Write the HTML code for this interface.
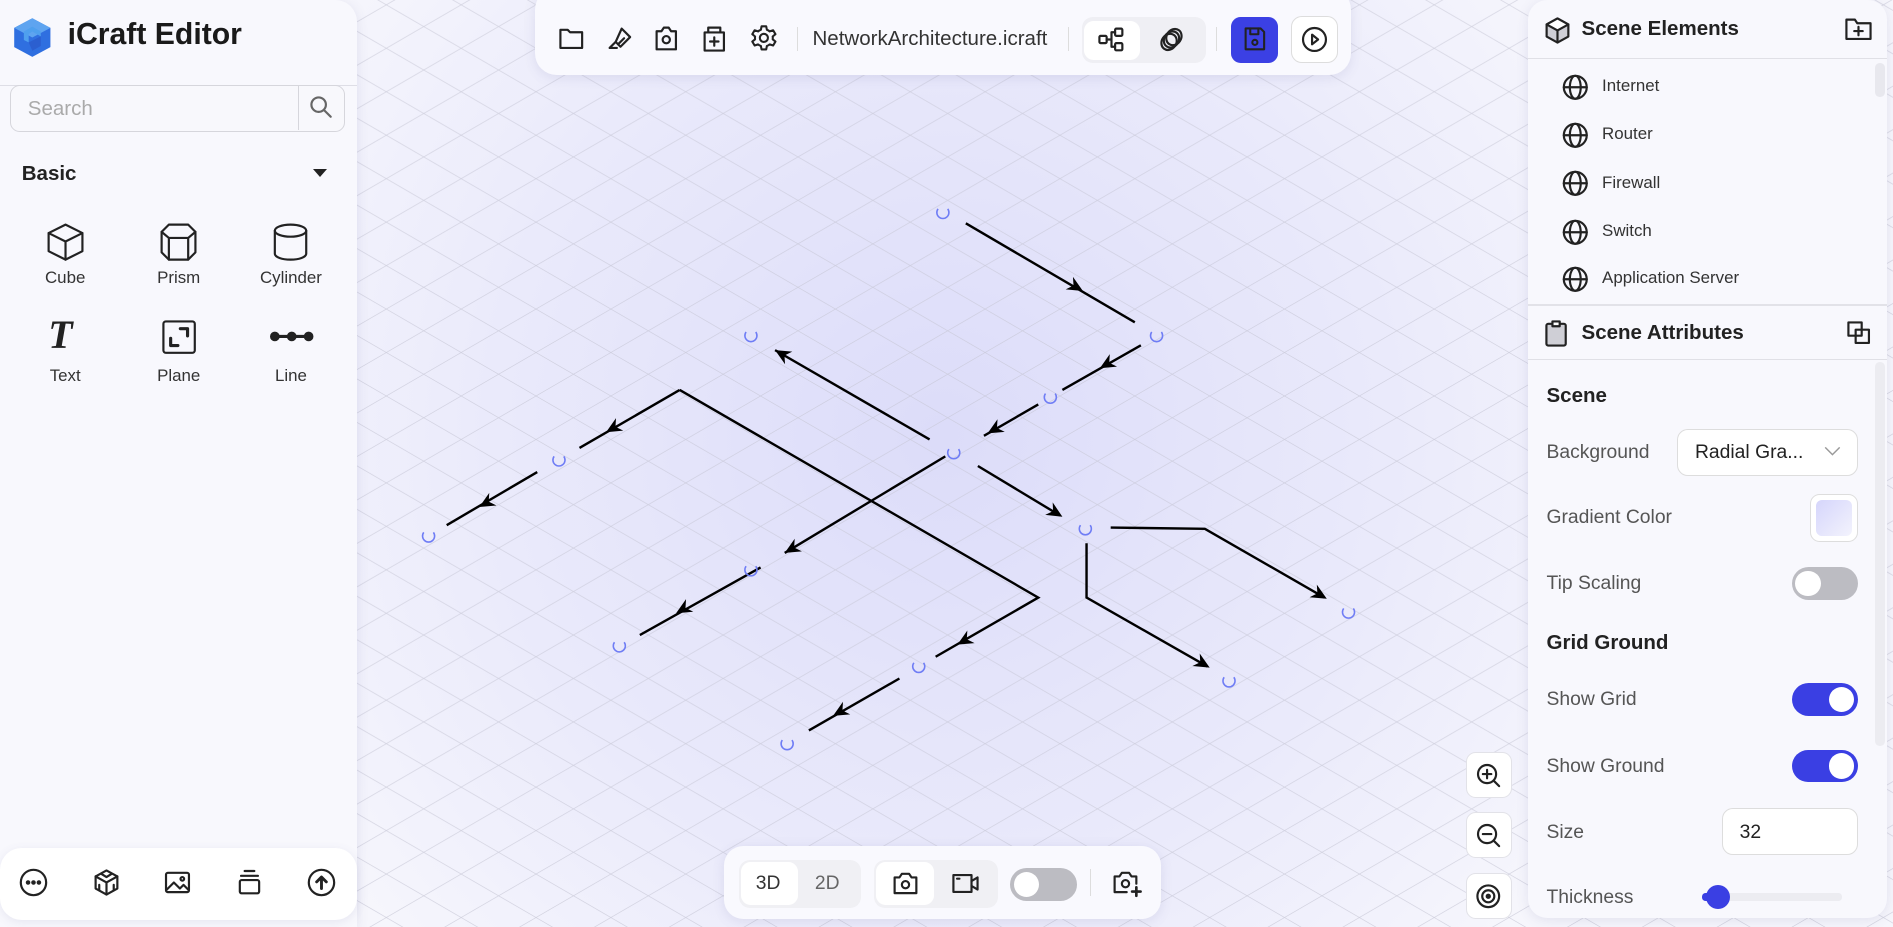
<!DOCTYPE html>
<html><head><meta charset="utf-8">
<style>
*{box-sizing:border-box;margin:0;padding:0}
html,body{width:1893px;height:927px;overflow:hidden;background:#f4f4fb}
#w{zoom:1.20727;width:1568px;height:768px;position:relative;font-family:"Liberation Sans",sans-serif;color:#222;overflow:hidden}
.abs{position:absolute}
.panel{background:#f8f8fd;box-shadow:0 2px 10px rgba(80,80,140,.12)}
svg.i{fill:none;stroke:#222;stroke-width:1.8;stroke-linecap:round;stroke-linejoin:round}
.lbl{font-size:14px;color:#333;text-align:center;width:80px;position:absolute}
.row{position:absolute;left:1281px;font-size:16px;color:#555}
.tg{position:absolute;width:55px;height:27px;border-radius:14px;background:#bcbcc2}
.tg::after{content:"";position:absolute;top:3px;left:3px;width:21px;height:21px;border-radius:50%;background:#fff}
.tg.on{background:#3a3fe3}
.tg.on::after{left:31px}
.el{position:absolute;left:1296px;font-size:14px;color:#333}
</style></head><body><div id="w">

<!-- canvas -->
<svg class="abs" style="left:0;top:0" width="1568" height="768">
<defs>
<radialGradient id="bg" cx="780" cy="360" r="620" gradientUnits="userSpaceOnUse">
<stop offset="0" stop-color="#dcdcf9"/><stop offset="0.6" stop-color="#eaeafb"/><stop offset="1" stop-color="#f6f6fc"/></radialGradient>
<pattern id="grid" width="62" height="36" patternUnits="userSpaceOnUse" x="10" y="4">
<path d="M0 0L62 36M62 0L0 36" stroke="#c6c6d4" stroke-width="0.5" stroke-opacity="0.8" fill="none"/></pattern>
<path id="ah" d="M0 0L-13 -6L-9 0L-13 6Z" fill="#000"/>
</defs>
<rect width="1568" height="768" fill="url(#bg)"/>
<rect width="1568" height="768" fill="url(#grid)"/>
<g stroke="#000" stroke-width="2" fill="none">
<path d="M800 185L940 267"/>
<path d="M945 286L880 323"/><path d="M860 335L815 361"/>
<path d="M770 364L642 290"/>
<path d="M810 386L878 427"/>
<path d="M920 437L998 438L1097 495"/>
<path d="M900 450L900 495L1000 552"/>
<path d="M783 378L650 458"/><path d="M630 470L530 526"/>
<path d="M563 323L860 495L775 544"/><path d="M745 562L670 605"/>
<path d="M563 323L480 371"/><path d="M445 391L370 435"/>
</g>
<g>
<use href="#ah" transform="translate(897,241) rotate(30)"/>
<use href="#ah" transform="translate(911,305) rotate(150)"/>
<use href="#ah" transform="translate(818,359) rotate(150)"/>
<use href="#ah" transform="translate(642,290) rotate(210)"/>
<use href="#ah" transform="translate(880,428) rotate(31)"/>
<use href="#ah" transform="translate(1099,496) rotate(30)"/>
<use href="#ah" transform="translate(1002,553) rotate(30)"/>
<use href="#ah" transform="translate(650,458) rotate(150)"/>
<use href="#ah" transform="translate(560,508) rotate(150)"/>
<use href="#ah" transform="translate(793,534) rotate(150)"/>
<use href="#ah" transform="translate(690,593) rotate(150)"/>
<use href="#ah" transform="translate(502,358) rotate(150)"/>
<use href="#ah" transform="translate(397,420) rotate(150)"/>
</g>
<g fill="none" stroke="#6f7df5" stroke-width="1.3">
<path id="nd" d="M-4 -3A5 5 0 1 0 4 -3" transform="translate(781,176)"/>
<use href="#nd" transform="translate(177,102)"/>
<use href="#nd" transform="translate(89,153)"/>
<use href="#nd" transform="translate(-159,102)"/>
<use href="#nd" transform="translate(9,199)"/>
<use href="#nd" transform="translate(-318,205)"/>
<use href="#nd" transform="translate(-426,268)"/>
<use href="#nd" transform="translate(118,262)"/>
<use href="#nd" transform="translate(-159,296)"/>
<use href="#nd" transform="translate(-268,359)"/>
<use href="#nd" transform="translate(-20,376)"/>
<use href="#nd" transform="translate(-129,440)"/>
<use href="#nd" transform="translate(336,331)"/>
<use href="#nd" transform="translate(237,388)"/>
</g>
</svg>

<!-- left panel -->
<div class="abs panel" style="left:0;top:0;width:296px;height:768px;border-radius:0 18px 0 0"></div>
<svg class="abs" style="left:11px;top:14px" width="32" height="34" viewBox="0 0 32 34">
<path d="M16 1L31 9V25L16 33L1 25V9Z" fill="#2f6fe0"/>
<path d="M16 1L31 9L16 17L1 9Z" fill="#5ea4f0"/>
<path d="M9 12L16 8L23 12V16L16 12L13 14V21L9 19Z" fill="#4fa0ee"/>
<path d="M13 21L23 16V24L16 28Z" fill="#2b5fd0"/>
</svg>
<div class="abs" style="left:56px;top:15px;font-size:25px;font-weight:bold;color:#1a1a1a">iCraft Editor</div>
<div class="abs" style="left:0;top:70px;width:296px;border-top:1px solid #dedee6"></div>
<div class="abs" style="left:8px;top:70px;width:278px;height:39px;border:1px solid #d6d6dc;border-radius:8px;background:#f8f8fc"></div>
<div class="abs" style="left:247px;top:71px;height:37px;border-left:1px solid #d6d6dc"></div>
<div class="abs" style="left:23px;top:80px;font-size:17px;color:#aaa">Search</div>
<svg class="abs i" style="left:256px;top:79px" width="20" height="20" viewBox="0 0 20 20" stroke-width="1.5"><circle cx="8" cy="8" r="6" stroke="#666"/><path d="M12.5 12.5L18 18" stroke="#666"/></svg>
<div class="abs" style="left:18px;top:134px;font-size:17px;font-weight:bold">Basic</div>
<div class="abs" style="left:259px;top:140px;width:0;height:0;border-left:6px solid transparent;border-right:6px solid transparent;border-top:7px solid #222"></div>

<svg class="abs i" style="left:37px;top:183px" width="34" height="34" viewBox="0 0 34 34" stroke-width="2.4"><path d="M17 3L31 10V25L17 32L3 25V10Z"/><path d="M3 10L17 17L31 10M17 17V32"/></svg>
<svg class="abs i" style="left:131px;top:183px" width="34" height="34" viewBox="0 0 34 34" stroke-width="2.4"><path d="M9 3H25L31 9V26L25 32H9L3 26V9Z"/><path d="M3 9L9 14H25L31 9M9 14V32M25 14V32"/></svg>
<svg class="abs i" style="left:224px;top:183px" width="34" height="34" viewBox="0 0 34 34" stroke-width="2.4"><ellipse cx="17" cy="8" rx="13" ry="5"/><path d="M4 8V27C4 30 10 32 17 32S30 30 30 27V8"/></svg>
<div class="lbl" style="left:14px;top:222px">Cube</div>
<div class="lbl" style="left:108px;top:222px">Prism</div>
<div class="lbl" style="left:201px;top:222px">Cylinder</div>
<div class="abs" style="left:40px;top:260px;font-family:'Liberation Serif',serif;font-style:italic;font-weight:bold;font-size:33px;line-height:36px">T</div>
<svg class="abs i" style="left:133px;top:264px" width="30" height="30" viewBox="0 0 30 30" stroke-width="2.4"><rect x="2" y="2" width="26" height="26" rx="2"/><path d="M8 16V22H14M16 8H22V14" stroke-width="2.6"/></svg>
<svg class="abs" style="left:224px;top:272px" width="36" height="14" viewBox="0 0 36 14"><path d="M4 7H32" stroke="#222" stroke-width="2.5"/><circle cx="4" cy="7" r="4" fill="#222"/><circle cx="18" cy="7" r="4" fill="#222"/><circle cx="32" cy="7" r="4" fill="#222"/></svg>
<div class="lbl" style="left:14px;top:303px">Text</div>
<div class="lbl" style="left:108px;top:303px">Plane</div>
<div class="lbl" style="left:201px;top:303px">Line</div>

<!-- bottom-left toolbar -->
<div class="abs" style="left:0;top:702px;width:296px;height:60px;background:#fff;border-radius:18px;box-shadow:0 2px 8px rgba(80,80,140,.1)"></div>
<svg class="abs i" style="left:16px;top:719px" width="24" height="24" viewBox="0 0 24 24"><circle cx="12" cy="12" r="10.5"/><circle cx="7.5" cy="12" r="1" fill="#222"/><circle cx="12" cy="12" r="1" fill="#222"/><circle cx="16.5" cy="12" r="1" fill="#222"/></svg>
<svg class="abs i" style="left:76px;top:719px" width="24" height="24" viewBox="0 0 24 24"><path d="M12 2L21 7V17L12 22L3 17V7Z"/><path d="M3 7L12 12L21 7M12 12V22M8 5L12 7.5L16 5M6 14V18M18 14V18"/></svg>
<svg class="abs i" style="left:135px;top:719px" width="24" height="24" viewBox="0 0 24 24"><rect x="2.5" y="4" width="19" height="16" rx="1.5"/><path d="M3 18L9 12L14 17L17 14L21 18"/><circle cx="16" cy="9" r="1.5"/></svg>
<svg class="abs i" style="left:195px;top:719px" width="24" height="24" viewBox="0 0 24 24"><path d="M8 2.5H16M5 6.5H19"/><rect x="4" y="10" width="16" height="11" rx="1.5"/></svg>
<svg class="abs i" style="left:254px;top:719px" width="24" height="24" viewBox="0 0 24 24"><circle cx="12" cy="12" r="10.5"/><path d="M12 17V8M8 11.5L12 7.5L16 11.5" stroke-width="2.4"/></svg>

<!-- top toolbar -->
<div class="abs panel" style="left:443px;top:-10px;width:676px;height:72px;border-radius:18px;background:#f9f9fe"></div>
<svg class="abs i" style="left:462px;top:21px" width="22" height="22" viewBox="0 0 22 22" stroke-width="1.6"><path d="M2 4H8L10 6H20V19H2Z"/></svg>
<svg class="abs i" style="left:502px;top:21px" width="22" height="22" viewBox="0 0 22 22" stroke-width="1.6"><path d="M13 3L20 10L12 18L8 14Z"/><path d="M8 14L3 19H9M10 16L15 11"/></svg>
<svg class="abs i" style="left:541px;top:20px" width="22" height="24" viewBox="0 0 22 24" stroke-width="1.6"><path d="M3 6H7L9 3H13L15 6H19V21H3Z"/><circle cx="11" cy="13" r="3"/></svg>
<svg class="abs i" style="left:581px;top:20px" width="22" height="24" viewBox="0 0 22 24" stroke-width="1.6"><path d="M6 3H16V7H19V22H3V7H6Z"/><path d="M11 11V18M7.5 14.5H14.5M6 7H16"/></svg>
<svg class="abs i" style="left:621px;top:20px" width="23" height="23" viewBox="0 0 24 24" stroke-width="1.6"><circle cx="12" cy="12" r="3.5"/><path d="M10 2H14L14.6 5A7.5 7.5 0 0 1 17 6.4L20 5.4L22 8.8L19.6 10.8A7.5 7.5 0 0 1 19.6 13.2L22 15.2L20 18.6L17 17.6A7.5 7.5 0 0 1 14.6 19L14 22H10L9.4 19A7.5 7.5 0 0 1 7 17.6L4 18.6L2 15.2L4.4 13.2A7.5 7.5 0 0 1 4.4 10.8L2 8.8L4 5.4L7 6.4A7.5 7.5 0 0 1 9.4 5Z"/></svg>
<div class="abs" style="left:660px;top:22px;height:20px;border-left:1px solid #ddd"></div>
<div class="abs" style="left:673px;top:22px;font-size:17px;color:#333">NetworkArchitecture.icraft</div>
<div class="abs" style="left:885px;top:22px;height:20px;border-left:1px solid #ddd"></div>
<div class="abs" style="left:896px;top:14px;width:103px;height:38px;background:#efeff4;border-radius:9px"></div>
<div class="abs" style="left:898px;top:17px;width:46px;height:33px;background:#fff;border-radius:8px"></div>
<svg class="abs i" style="left:909px;top:21px" width="24" height="24" viewBox="0 0 24 24" stroke-width="2"><rect x="2" y="9" width="6" height="6" rx="1"/><rect x="15" y="3" width="6" height="6" rx="1"/><rect x="15" y="15" width="6" height="6" rx="1"/><path d="M8 12H12V6H15M12 12V18H15"/></svg>
<svg class="abs i" style="left:958px;top:21px" width="24" height="24" viewBox="0 0 24 24" stroke="#666" stroke-width="1.6"><ellipse cx="10" cy="14" rx="6" ry="7" transform="rotate(35 10 14)"/><ellipse cx="12" cy="12" rx="6" ry="7" transform="rotate(35 12 12)"/><ellipse cx="14" cy="10" rx="6" ry="7" transform="rotate(35 14 10)"/></svg>
<div class="abs" style="left:1007px;top:22px;height:20px;border-left:1px solid #ddd"></div>
<div class="abs" style="left:1020px;top:14px;width:39px;height:38px;background:#3b40e4;border-radius:8px"></div>
<svg class="abs i" style="left:1028px;top:21px" width="23" height="23" viewBox="0 0 24 24" stroke="#fff" stroke-width="1.6"><path d="M4 3H17L20 6V21H4Z"/><path d="M8 3V8H15V3"/><circle cx="12" cy="15" r="2.2"/></svg>
<div class="abs" style="left:1069px;top:13px;width:39px;height:39px;background:#fff;border:1px solid #ddd;border-radius:9px"></div>
<svg class="abs i" style="left:1077px;top:21px" width="24" height="24" viewBox="0 0 24 24" stroke-width="1.8"><circle cx="12" cy="12" r="9.5"/><path d="M10 8L15 12L10 16Z"/></svg>

<!-- right panel -->
<div class="abs panel" style="left:1266px;top:0;width:297px;height:760px;border-radius:16px"></div>
<svg class="abs i" style="left:1278px;top:13px" width="24" height="24" viewBox="0 0 24 24" stroke-width="1.6"><path d="M12 2L21 7V17L12 22L3 17V7Z" fill="#cfcfd6"/><path d="M3 7L12 12L21 7L12 2Z" fill="#fff"/><path d="M12 12V22"/></svg>
<div class="abs" style="left:1310px;top:14px;font-size:17px;font-weight:bold">Scene Elements</div>
<svg class="abs i" style="left:1527px;top:13px" width="24" height="22" viewBox="0 0 24 22" stroke-width="1.5"><path d="M2 3H9L11 6H22V19H2Z"/><path d="M12 9V16M8.5 12.5H15.5"/></svg>
<div class="abs" style="left:1266px;top:48px;width:297px;border-top:1px solid #e0e0e6"></div>
<div class="abs" style="left:1553px;top:52px;width:8px;height:28px;background:#e8e8ee;border-radius:4px"></div>
<div class="abs" style="left:1266px;top:252px;width:297px;border-top:2px solid #e2e2e8"></div>
<svg class="abs i" style="left:1294px;top:61px" width="22" height="22" viewBox="0 0 22 22" stroke-width="1.6"><circle cx="11" cy="11" r="9.5"/><path d="M1.5 11H20.5"/><ellipse cx="11" cy="11" rx="4.5" ry="9.5"/></svg>
<svg class="abs i" style="left:1294px;top:101px" width="22" height="22" viewBox="0 0 22 22" stroke-width="1.6"><circle cx="11" cy="11" r="9.5"/><path d="M1.5 11H20.5"/><ellipse cx="11" cy="11" rx="4.5" ry="9.5"/></svg>
<svg class="abs i" style="left:1294px;top:141px" width="22" height="22" viewBox="0 0 22 22" stroke-width="1.6"><circle cx="11" cy="11" r="9.5"/><path d="M1.5 11H20.5"/><ellipse cx="11" cy="11" rx="4.5" ry="9.5"/></svg>
<svg class="abs i" style="left:1294px;top:181px" width="22" height="22" viewBox="0 0 22 22" stroke-width="1.6"><circle cx="11" cy="11" r="9.5"/><path d="M1.5 11H20.5"/><ellipse cx="11" cy="11" rx="4.5" ry="9.5"/></svg>
<svg class="abs i" style="left:1294px;top:220px" width="22" height="22" viewBox="0 0 22 22" stroke-width="1.6"><circle cx="11" cy="11" r="9.5"/><path d="M1.5 11H20.5"/><ellipse cx="11" cy="11" rx="4.5" ry="9.5"/></svg>
<div class="el" style="left:1327px;top:63px">Internet</div>
<div class="el" style="left:1327px;top:103px">Router</div>
<div class="el" style="left:1327px;top:143px">Firewall</div>
<div class="el" style="left:1327px;top:183px">Switch</div>
<div class="el" style="left:1327px;top:222px">Application Server</div>

<svg class="abs i" style="left:1279px;top:264px" width="20" height="24" viewBox="0 0 20 24" stroke-width="1.6"><rect x="2" y="4" width="16" height="18" rx="1.5" fill="#cfcfd6"/><path d="M7 2H13V6H7Z" fill="#fff"/></svg>
<div class="abs" style="left:1310px;top:266px;font-size:17px;font-weight:bold">Scene Attributes</div>
<svg class="abs i" style="left:1529px;top:265px" width="22" height="22" viewBox="0 0 22 22" stroke-width="1.5"><rect x="2" y="2" width="11" height="11"/><rect x="8" y="8" width="11" height="11"/></svg>
<div class="abs" style="left:1266px;top:297px;width:297px;border-top:1px solid #e0e0e6"></div>
<div class="abs" style="left:1553px;top:300px;width:8px;height:318px;background:#ececf1;border-radius:4px"></div>

<div class="abs" style="left:1281px;top:318px;font-size:17px;font-weight:bold">Scene</div>
<div class="row" style="top:366px">Background</div>
<div class="abs" style="left:1389px;top:355px;width:150px;height:39px;background:#fff;border:1px solid #ddd;border-radius:9px"></div>
<div class="abs" style="left:1404px;top:366px;font-size:16px;color:#222">Radial Gra...</div>
<svg class="abs" style="left:1511px;top:369px" width="14" height="10" viewBox="0 0 14 10"><path d="M1 2L7 8L13 2" stroke="#999" fill="none" stroke-width="1.2"/></svg>
<div class="row" style="top:420px">Gradient Color</div>
<div class="abs" style="left:1499px;top:409px;width:40px;height:40px;background:#fff;border:1px solid #ddd;border-radius:8px"></div>
<div class="abs" style="left:1504px;top:414px;width:30px;height:30px;border-radius:5px;background:linear-gradient(135deg,#d5d5fb,#f3f3fd)"></div>
<div class="row" style="top:475px">Tip Scaling</div>
<div class="tg" style="left:1484px;top:470px"></div>
<div class="abs" style="left:1281px;top:523px;font-size:17px;font-weight:bold">Grid Ground</div>
<div class="row" style="top:571px">Show Grid</div>
<div class="tg on" style="left:1484px;top:566px"></div>
<div class="row" style="top:626px">Show Ground</div>
<div class="tg on" style="left:1484px;top:621px"></div>
<div class="row" style="top:681px">Size</div>
<div class="abs" style="left:1426px;top:669px;width:113px;height:39px;background:#fff;border:1px solid #ddd;border-radius:9px"></div>
<div class="abs" style="left:1441px;top:681px;font-size:16px;color:#222">32</div>
<div class="row" style="top:735px">Thickness</div>
<div class="abs" style="left:1410px;top:740px;width:116px;height:6px;background:#ececf1;border-radius:3px"></div>
<div class="abs" style="left:1410px;top:740px;width:12px;height:6px;background:#3a3fe3;border-radius:3px"></div>
<div class="abs" style="left:1413px;top:733px;width:20px;height:20px;background:#3a3fe3;border-radius:50%"></div>

<!-- zoom buttons -->
<div class="abs" style="left:1214px;top:623px;width:38px;height:38px;background:#fff;border:1px solid #e2e2e8;border-radius:8px"></div>
<div class="abs" style="left:1214px;top:673px;width:38px;height:38px;background:#fff;border:1px solid #e2e2e8;border-radius:8px"></div>
<div class="abs" style="left:1214px;top:723px;width:38px;height:38px;background:#fff;border:1px solid #e2e2e8;border-radius:8px"></div>
<svg class="abs i" style="left:1222px;top:631px" width="22" height="22" viewBox="0 0 22 22" stroke-width="1.8"><circle cx="10" cy="10" r="7.5"/><path d="M15.5 15.5L20 20M10 6.5V13.5M6.5 10H13.5"/></svg>
<svg class="abs i" style="left:1222px;top:681px" width="22" height="22" viewBox="0 0 22 22" stroke-width="1.8"><circle cx="10" cy="10" r="7.5"/><path d="M15.5 15.5L20 20M6.5 10H13.5"/></svg>
<svg class="abs i" style="left:1222px;top:731px" width="22" height="22" viewBox="0 0 22 22" stroke-width="1.8"><circle cx="11" cy="11" r="9"/><circle cx="11" cy="11" r="5"/><circle cx="11" cy="11" r="1.3" fill="#222"/></svg>

<!-- bottom center toolbar -->
<div class="abs panel" style="left:600px;top:701px;width:362px;height:60px;border-radius:16px;background:#f9f9fe"></div>
<div class="abs" style="left:612px;top:712px;width:101px;height:40px;background:#f0f0f4;border-radius:9px"></div>
<div class="abs" style="left:614px;top:714px;width:47px;height:36px;background:#fff;border-radius:8px"></div>
<div class="abs" style="left:626px;top:723px;font-size:16px;color:#333">3D</div>
<div class="abs" style="left:675px;top:723px;font-size:16px;color:#666">2D</div>
<div class="abs" style="left:724px;top:712px;width:103px;height:40px;background:#f0f0f4;border-radius:9px"></div>
<div class="abs" style="left:726px;top:714px;width:48px;height:36px;background:#fff;border-radius:8px"></div>
<svg class="abs i" style="left:738px;top:720px" width="24" height="24" viewBox="0 0 24 24" stroke-width="1.8"><path d="M3 7H7L9 4H15L17 7H21V20H3Z"/><circle cx="12" cy="13" r="3"/></svg>
<svg class="abs i" style="left:788px;top:720px" width="24" height="24" viewBox="0 0 24 24" stroke-width="1.6" stroke="#444"><rect x="2" y="5" width="15" height="14"/><path d="M17 10L22 7V17L17 14M5 8H7"/></svg>
<div class="tg" style="left:837px;top:719px"></div>
<div class="abs" style="left:903px;top:720px;height:22px;border-left:1px solid #ddd"></div>
<svg class="abs i" style="left:920px;top:719px" width="26" height="26" viewBox="0 0 26 26" stroke-width="1.8"><path d="M13 20H3V7H7L9 4H15L17 7H21V13"/><circle cx="12" cy="13" r="3"/><path d="M21 16V23M17.5 19.5H24.5" stroke-width="2.2"/></svg>

</div></body></html>
